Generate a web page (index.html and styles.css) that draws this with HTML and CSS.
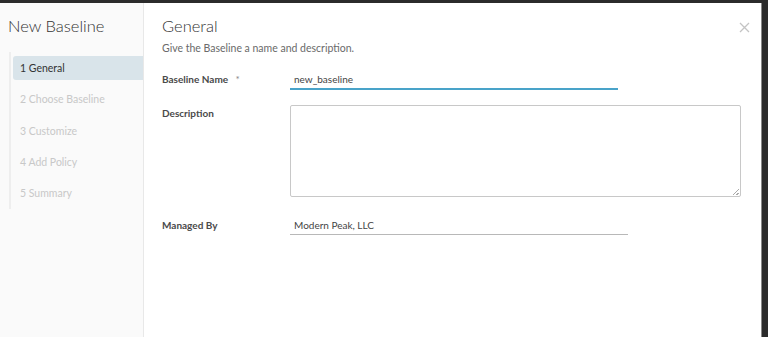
FILE: index.html
```html
<!DOCTYPE html>
<html lang="en">
<head>
  <meta charset="UTF-8">
  <title>New Baseline</title>
  <link rel="stylesheet" href="styles.css">
</head>
<body>
  <div class="dialog">
    <div class="sidebar">
      <h2 class="wizard-title">New Baseline</h2>
      <ul class="steps">
        <li class="active">1 General</li>
        <li>2 Choose Baseline</li>
        <li>3 Customize</li>
        <li>4 Add Policy</li>
        <li>5 Summary</li>
      </ul>
    </div>
    <div class="content">
      <div class="head">
        <h3>General</h3>
        <span class="close">
          <svg width="11" height="11" viewBox="0 0 11 11"><path d="M1 1L10 10M10 1L1 10" stroke="#c4c4c4" stroke-width="1.3" fill="none"/></svg>
        </span>
      </div>
      <p class="sub">Give the Baseline a name and description.</p>
      <div class="form">
        <label class="lbl name-lbl">Baseline Name <span class="req">*</span></label>
        <div class="field name-field">new_baseline</div>

        <label class="lbl desc-lbl">Description</label>
        <div class="textarea"><span class="grip"></span></div>

        <label class="lbl managed-lbl">Managed By</label>
        <div class="field managed-field">Modern Peak, LLC</div>
      </div>
    </div>
  </div>
</body>
</html>
```

FILE: styles.css
```css
* {
  margin: 0;
  padding: 0;
  box-sizing: border-box;
}

body {
  background-color: #2b2b2b;
  font-family: Lato, "Open Sans", "Liberation Sans", sans-serif;
  color: #333;
  height: 337px;
  overflow: hidden;
}

.dialog {
  display: flex;
  margin-top: 3px;
  margin-right: 6px;
  height: 334px;
  background-color: #fff;
  border-right: 1px solid #888;
}

/* left wizard nav */
.sidebar {
  width: 144px;
  background-color: #fafafa;
  border-right: 1px solid #e8e8e8;
}

.wizard-title {
  font-weight: 300;
  font-size: 16.5px;
  color: #333;
  padding: 12px 0 0 8px;
  height: 49px;
  line-height: 22px;
}

.steps {
  list-style: none;
  margin-left: 9px;
  padding: 4px 0 4px 2px;
  border-left: 2px solid #eeeeee;
}

.steps li {
  height: 24px;
  line-height: 24px;
  margin-bottom: 7.3px;
  padding-left: 7px;
  font-size: 10.5px;
  color: #c8c8c8;
}

.steps li:last-child {
  margin-bottom: 0;
}

.steps li.active {
  background-color: #d9e4ea;
  color: #333;
  border-radius: 3px 0 0 3px;
}

/* right content */
.content {
  flex: 1;
  padding: 12px 0 0 18px;
}

.head {
  display: flex;
  justify-content: space-between;
  align-items: center;
}

.head h3 {
  font-weight: 300;
  font-size: 16.5px;
  color: #333;
  line-height: 22px;
}

.close {
  display: flex;
  margin-right: 11px;
  margin-top: 2px;
}

.sub {
  font-size: 10.5px;
  color: #6a6a6a;
  margin-top: 4px;
  line-height: 14px;
}

.form {
  display: grid;
  grid-template-columns: 128px 451px;
  margin-top: 14px;
}

.lbl {
  font-weight: 700;
  color: #4a4a4a;
  font-size: 10px;
}

.req {
  color: #888;
  margin-left: 5px;
  font-weight: 400;
}

.name-lbl {
  line-height: 20px;
}

.field {
  height: 21px;
  line-height: 20px;
  padding-left: 4px;
  color: #444;
  font-size: 10px;
}

.name-field {
  width: 328px;
  border-bottom: 2px solid #49a3c9;
}

.desc-lbl {
  margin-top: 15px;
  padding-top: 2px;
}

.textarea {
  margin-top: 15px;
  height: 92px;
  border: 1px solid #c8c8c8;
  border-radius: 2px;
  position: relative;
}

.grip {
  position: absolute;
  right: 1px;
  bottom: 1px;
  width: 6px;
  height: 6px;
  background: linear-gradient(135deg, transparent 45%, #aaa 45%, #aaa 55%, transparent 55%, transparent 75%, #aaa 75%, #aaa 85%, transparent 85%);
}

.managed-lbl {
  margin-top: 18px;
  line-height: 20px;
}

.managed-field {
  margin-top: 18px;
  width: 338px;
  height: 20px;
  border-bottom: 1px solid #b8b8b8;
}
```
